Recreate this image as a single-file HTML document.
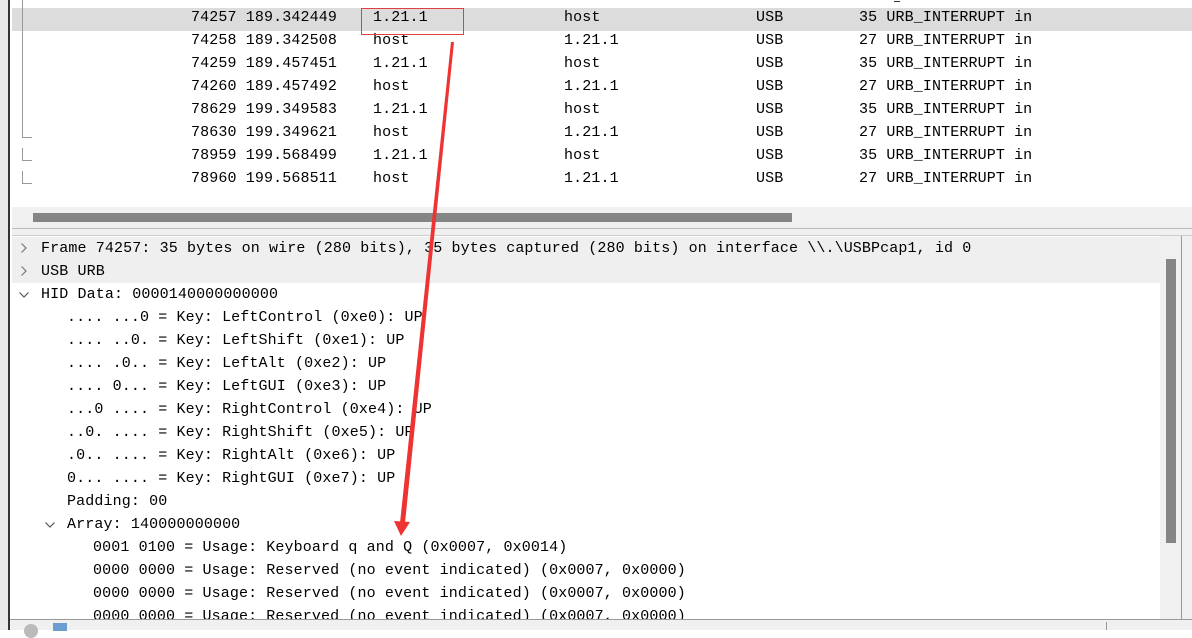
<!DOCTYPE html>
<html><head><meta charset="utf-8"><style>
*{margin:0;padding:0;box-sizing:border-box}
body{width:1192px;height:630px;overflow:hidden;background:#fff;position:relative;font-family:"Liberation Mono","DejaVu Sans Mono",monospace;font-size:15px;color:#000;letter-spacing:0.12px}
.abs{position:absolute;white-space:pre;line-height:23px}
.lb{position:absolute;left:0;top:0;width:10px;height:630px;background:#e8e8e8;border-right:2px solid #333}
.row{position:absolute;left:12px;right:0;height:23px}
.sel{background:#dcdcdc}
svg.ch{position:absolute}
</style></head><body>
<div class="lb"></div>
<div class="row sel" style="top:8px"></div>
<div style="position:absolute;left:22px;top:0;width:1px;height:138px;background:#999"></div>
<div style="position:absolute;left:22px;top:137px;width:10px;height:1px;background:#999"></div>
<div style="position:absolute;left:22px;top:148px;width:1px;height:13px;background:#999"></div>
<div style="position:absolute;left:22px;top:160px;width:10px;height:1px;background:#999"></div>
<div style="position:absolute;left:22px;top:171px;width:1px;height:13px;background:#999"></div>
<div style="position:absolute;left:22px;top:183px;width:10px;height:1px;background:#999"></div>
<div style="position:absolute;left:894px;top:1px;width:6px;height:1px;background:#333"></div>

<div class="abs" style="left:191px;top:6px">74257 189.342449</div><div class="abs" style="left:373px;top:6px">1.21.1</div><div class="abs" style="left:564px;top:6px">host</div><div class="abs" style="left:756px;top:6px">USB</div><div class="abs" style="left:859px;top:6px">35 URB_INTERRUPT in</div>
<div class="abs" style="left:191px;top:29px">74258 189.342508</div><div class="abs" style="left:373px;top:29px">host</div><div class="abs" style="left:564px;top:29px">1.21.1</div><div class="abs" style="left:756px;top:29px">USB</div><div class="abs" style="left:859px;top:29px">27 URB_INTERRUPT in</div>
<div class="abs" style="left:191px;top:52px">74259 189.457451</div><div class="abs" style="left:373px;top:52px">1.21.1</div><div class="abs" style="left:564px;top:52px">host</div><div class="abs" style="left:756px;top:52px">USB</div><div class="abs" style="left:859px;top:52px">35 URB_INTERRUPT in</div>
<div class="abs" style="left:191px;top:75px">74260 189.457492</div><div class="abs" style="left:373px;top:75px">host</div><div class="abs" style="left:564px;top:75px">1.21.1</div><div class="abs" style="left:756px;top:75px">USB</div><div class="abs" style="left:859px;top:75px">27 URB_INTERRUPT in</div>
<div class="abs" style="left:191px;top:98px">78629 199.349583</div><div class="abs" style="left:373px;top:98px">1.21.1</div><div class="abs" style="left:564px;top:98px">host</div><div class="abs" style="left:756px;top:98px">USB</div><div class="abs" style="left:859px;top:98px">35 URB_INTERRUPT in</div>
<div class="abs" style="left:191px;top:121px">78630 199.349621</div><div class="abs" style="left:373px;top:121px">host</div><div class="abs" style="left:564px;top:121px">1.21.1</div><div class="abs" style="left:756px;top:121px">USB</div><div class="abs" style="left:859px;top:121px">27 URB_INTERRUPT in</div>
<div class="abs" style="left:191px;top:144px">78959 199.568499</div><div class="abs" style="left:373px;top:144px">1.21.1</div><div class="abs" style="left:564px;top:144px">host</div><div class="abs" style="left:756px;top:144px">USB</div><div class="abs" style="left:859px;top:144px">35 URB_INTERRUPT in</div>
<div class="abs" style="left:191px;top:167px">78960 199.568511</div><div class="abs" style="left:373px;top:167px">host</div><div class="abs" style="left:564px;top:167px">1.21.1</div><div class="abs" style="left:756px;top:167px">USB</div><div class="abs" style="left:859px;top:167px">27 URB_INTERRUPT in</div>

<div style="position:absolute;left:12px;top:207px;right:0;height:22px;background:#f0f0f0;border-bottom:1px solid #bbb"></div>
<div style="position:absolute;left:33px;top:213px;width:759px;height:9px;background:#858585"></div>
<div style="position:absolute;left:12px;top:229px;right:0;height:7px;background:#f0f0f0;border-bottom:1px solid #ccc"></div>

<div style="position:absolute;left:12px;top:237px;width:1148px;height:46px;background:#efefef"></div>
<div style="position:absolute;left:1160px;top:236px;width:22px;height:384px;background:#f0f0f0;border-right:1px solid #999"></div>
<div style="position:absolute;left:1166px;top:259px;width:10px;height:284px;background:#858585"></div>
<div style="position:absolute;left:1182px;top:236px;width:10px;height:384px;background:#f0f0f0"></div>

<svg class="ch" style="left:20px;top:242px" width="8" height="12"><path d="M1.5 1.5 L6 6 L1.5 10.5" fill="none" stroke="#777" stroke-width="1.2"/></svg>
<svg class="ch" style="left:20px;top:265px" width="8" height="12"><path d="M1.5 1.5 L6 6 L1.5 10.5" fill="none" stroke="#777" stroke-width="1.2"/></svg>
<svg class="ch" style="left:18px;top:291px" width="12" height="8"><path d="M1.5 1.5 L6 6 L10.5 1.5" fill="none" stroke="#555" stroke-width="1.2"/></svg>
<svg class="ch" style="left:44px;top:521px" width="12" height="8"><path d="M1.5 1.5 L6 6 L10.5 1.5" fill="none" stroke="#555" stroke-width="1.2"/></svg>

<div class="abs" style="left:41px;top:237px">Frame 74257: 35 bytes on wire (280 bits), 35 bytes captured (280 bits) on interface \\.\USBPcap1, id 0</div>
<div class="abs" style="left:41px;top:260px">USB URB</div>
<div class="abs" style="left:41px;top:283px">HID Data: 0000140000000000</div>
<div class="abs" style="left:67px;top:306px">.... ...0 = Key: LeftControl (0xe0): UP</div>
<div class="abs" style="left:67px;top:329px">.... ..0. = Key: LeftShift (0xe1): UP</div>
<div class="abs" style="left:67px;top:352px">.... .0.. = Key: LeftAlt (0xe2): UP</div>
<div class="abs" style="left:67px;top:375px">.... 0... = Key: LeftGUI (0xe3): UP</div>
<div class="abs" style="left:67px;top:398px">...0 .... = Key: RightControl (0xe4): UP</div>
<div class="abs" style="left:67px;top:421px">..0. .... = Key: RightShift (0xe5): UP</div>
<div class="abs" style="left:67px;top:444px">.0.. .... = Key: RightAlt (0xe6): UP</div>
<div class="abs" style="left:67px;top:467px">0... .... = Key: RightGUI (0xe7): UP</div>
<div class="abs" style="left:67px;top:490px">Padding: 00</div>
<div class="abs" style="left:67px;top:513px">Array: 140000000000</div>
<div class="abs" style="left:93px;top:536px">0001 0100 = Usage: Keyboard q and Q (0x0007, 0x0014)</div>
<div class="abs" style="left:93px;top:559px">0000 0000 = Usage: Reserved (no event indicated) (0x0007, 0x0000)</div>
<div class="abs" style="left:93px;top:582px">0000 0000 = Usage: Reserved (no event indicated) (0x0007, 0x0000)</div>
<div class="abs" style="left:93px;top:605px">0000 0000 = Usage: Reserved (no event indicated) (0x0007, 0x0000)</div>

<div style="position:absolute;left:10px;top:619px;right:0;height:11px;background:#f0f0f0;border-top:1px solid #999"></div>
<div style="position:absolute;left:24px;top:624px;width:14px;height:14px;border-radius:50%;background:#bbb"></div>
<div style="position:absolute;left:53px;top:623px;width:14px;height:8px;background:#6a9ed0"></div>
<div style="position:absolute;left:1106px;top:622px;width:1px;height:8px;background:#999"></div>

<div style="position:absolute;left:361px;top:8px;width:103px;height:27px;border:1px solid #e04040"></div>
<svg style="position:absolute;left:0;top:0" width="1192" height="630">
<polygon points="451,42 454,42 405,523 400,523" fill="#ee3333"/>
<polygon points="394,521 410,522 401,536" fill="#ee3333"/>
</svg>
</body></html>
